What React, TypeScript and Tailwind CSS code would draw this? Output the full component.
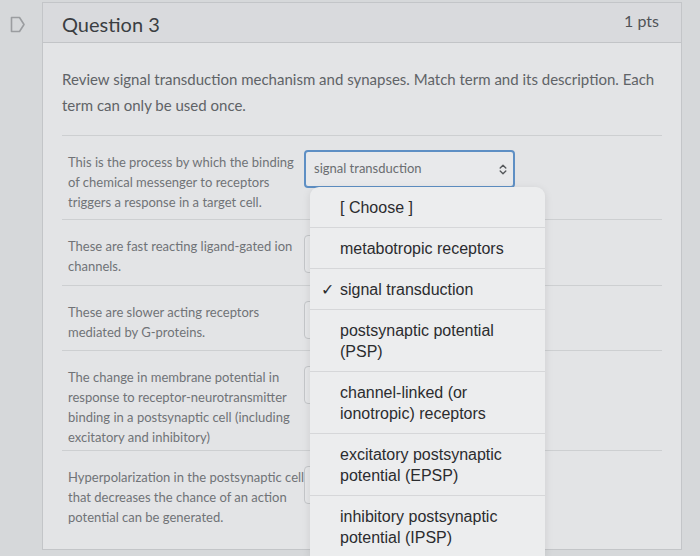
import { ReactNode } from "react";

interface MatchRow {
  lines: string[];
  height: string;
  value?: string;
}

const rows: MatchRow[] = [
  {
    lines: [
      "This is the process by which the binding",
      "of chemical messenger to receptors",
      "triggers a response in a target cell.",
    ],
    height: "h-[84px]",
    value: "signal transduction",
  },
  {
    lines: ["These are fast reacting ligand-gated ion", "channels."],
    height: "h-[66px]",
  },
  {
    lines: ["These are slower acting receptors", "mediated by G-proteins."],
    height: "h-[65px]",
  },
  {
    lines: [
      "The change in membrane potential in",
      "response to receptor-neurotransmitter",
      "binding in a postsynaptic cell (including",
      "excitatory and inhibitory)",
    ],
    height: "h-[100px]",
  },
  {
    lines: [
      "Hyperpolarization in the postsynaptic cell",
      "that decreases the chance of an action",
      "potential can be generated.",
    ],
    height: "h-[98px]",
  },
];

const options: { label: ReactNode; checked?: boolean }[] = [
  { label: "[ Choose ]" },
  { label: "metabotropic receptors" },
  { label: "signal transduction", checked: true },
  { label: <>postsynaptic potential<br />(PSP)</> },
  { label: <>channel-linked (or<br />ionotropic) receptors</> },
  { label: <>excitatory postsynaptic<br />potential (EPSP)</> },
  { label: <>inhibitory postsynaptic<br />potential (IPSP)</> },
];

const FlagIcon = () => (
  <svg width="16" height="17" viewBox="0 0 16 17" fill="none">
    <path d="M1.5 1.5 H9.5 L14 8.5 L9.5 15.5 H1.5 Z" stroke="#9b9da0" strokeWidth="1.6" strokeLinejoin="round" />
  </svg>
);

const UpDown = () => (
  <svg width="8" height="11" viewBox="0 0 8 11" fill="none">
    <path d="M1.2 4 L4 1.3 L6.8 4 M1.2 7 L4 9.7 L6.8 7" stroke="#55585b" strokeWidth="1.4" strokeLinecap="round" strokeLinejoin="round" />
  </svg>
);

const App = () => {
  return (
    <div className="w-[700px] h-[556px] overflow-hidden bg-[#d6d8da] flex font-['Lato','Noto_Sans',sans-serif]">
      {/* flag column */}
      <div className="w-[42px] shrink-0 pt-[16px] pl-[10px]">
        <FlagIcon />
      </div>

      {/* question card */}
      <div className="relative w-[640px] h-[548px] shrink-0 mt-[2px] border border-[#c3c5c8] bg-[#e3e4e6] flex flex-col">
        <div className="h-[40px] shrink-0 bg-[#d9dadd] border-b border-[#c2c4c7] flex justify-between pl-[19px] pr-[22px]">
          <div className="text-[20px] text-[#3b3e42] pt-[8px] leading-[26px]">Question 3</div>
          <div className="text-[16px] text-[#505357] pt-[5px] leading-[26px]">1 pts</div>
        </div>

        <div className="px-[19px] flex-1">
          <div className="pt-[23px] pb-[17px] border-b border-[#cdcfd1] text-[15px] leading-[26px] text-[#606367]">
            Review signal transduction mechanism and synapses. Match term and its description. Each term can only be used once.
          </div>

          {rows.map((row, i) => (
            <div
              key={i}
              className={`${row.height} flex gap-[8px] pl-[6px] pt-[15px] ${i < rows.length - 1 ? "border-b border-[#cdcfd1]" : ""}`}
            >
              <div className="w-[228px] shrink-0 pt-[1px] text-[13px] leading-[20px] text-[#707377]">
                {row.lines.map((l, j) => (
                  <div key={j} className="whitespace-nowrap">{l}</div>
                ))}
              </div>
              {row.value ? (
                <div className="w-[211px] h-[38px] shrink-0 -mt-[1px] rounded-[4px] border-2 border-[#5e8fc4] bg-[#e8e9eb] flex items-center justify-between pl-[8px] pr-[6px]">
                  <span className="text-[13px] text-[#6a6d71]">{row.value}</span>
                  <UpDown />
                </div>
              ) : (
                <div className="w-[211px] h-[38px] shrink-0 rounded-[4px] border border-[#c4c6c9] bg-[#e6e7e9]" />
              )}
            </div>
          ))}
        </div>

        {/* open native select menu */}
        <div className="absolute top-[184px] left-[267px] w-[235px] rounded-t-[9px] bg-[#ecedee] shadow-[0_2px_8px_rgba(0,0,0,0.1)] font-['Liberation_Sans','Helvetica',sans-serif] text-[16px] leading-[21px] text-[#2b2c2e]">
          {options.map((o, i) => (
            <div
              key={i}
              className={`relative pl-[30px] pr-[10px] pt-[10px] pb-[9px] ${i > 0 ? "border-t border-[#d6d7d9]" : ""}`}
            >
              {o.checked && <span className="absolute left-[11px] top-[10px]">✓</span>}
              {o.label}
            </div>
          ))}
        </div>
      </div>
    </div>
  );
};

export default App;
